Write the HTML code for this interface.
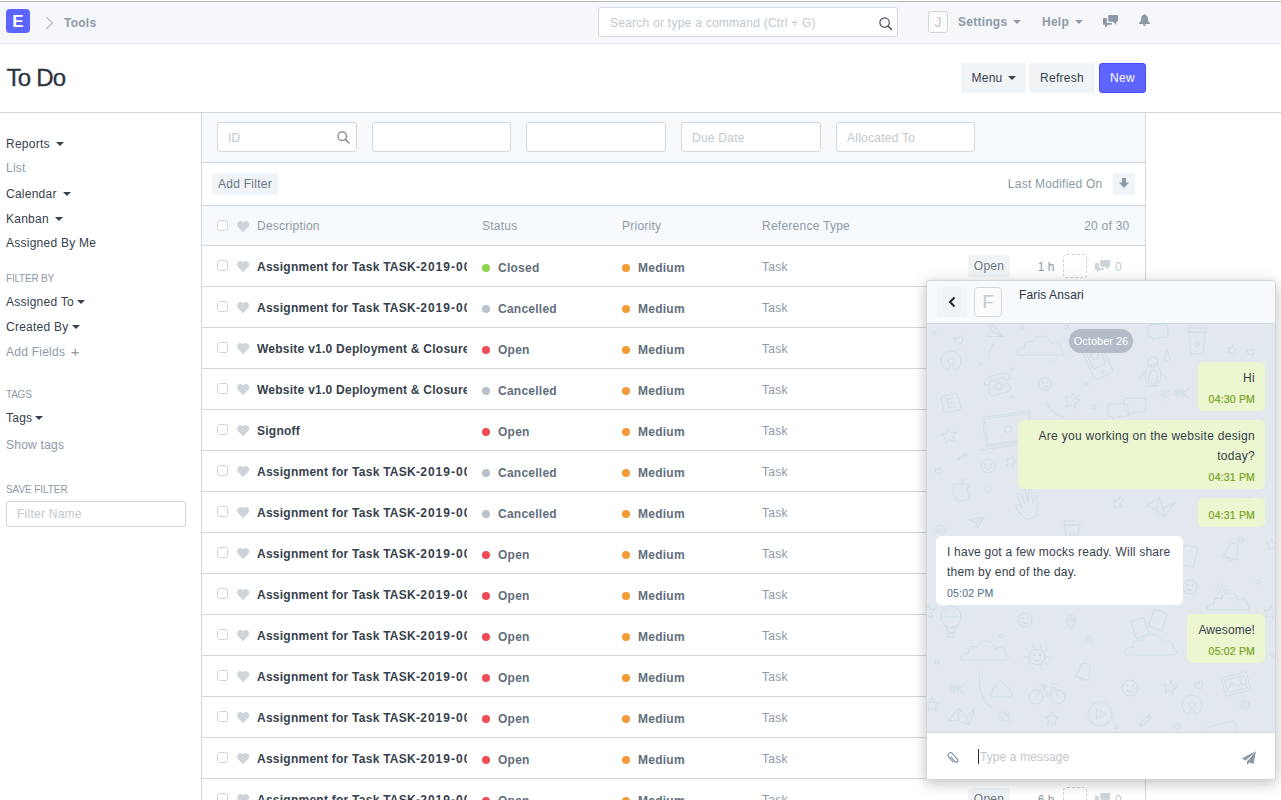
<!DOCTYPE html>
<html lang="en">
<head>
<meta charset="utf-8">
<title>To Do</title>
<style>
*{box-sizing:border-box;margin:0;padding:0}
html,body{width:1281px;height:800px;overflow:hidden;background:#fff}
body{font-family:"Liberation Sans",Arial,sans-serif;font-size:12px;color:#36414c;position:relative;letter-spacing:.25px}
.abs{position:absolute}
/* navbar */
.topline{position:absolute;left:0;top:1px;width:1281px;height:1px;background:#b7b7b7}
.navbar{position:absolute;left:0;top:2px;width:1281px;height:42px;background:#f5f7fa;border-bottom:1px solid #e4e8ec}
.logo{position:absolute;left:6px;top:7px;width:24px;height:24px;border-radius:4px;background:#5e64ff;color:#fff;font-weight:bold;font-size:17px;line-height:26px;text-align:center;letter-spacing:0}
.crumb{position:absolute;left:64px;top:14px;font-weight:bold;font-size:12px;color:#8d99a6;line-height:14px}
.search{position:absolute;left:598px;top:5px;width:300px;height:30px;border:1px solid #d1d8dd;border-radius:3px;background:#fff;color:#c0c8d0;font-size:12px;line-height:30px;padding-left:11px}
.nav-av{position:absolute;left:928px;top:9px;width:20px;height:22px;border:1px solid #d1d8dd;border-radius:3px;background:#fafbfc;color:#c4ccd4;font-size:14px;line-height:20px;text-align:center;letter-spacing:0}
.navtxt{position:absolute;top:13px;font-weight:bold;color:#8d99a6;font-size:12px;line-height:14px}
.caret{display:inline-block;width:0;height:0;border-left:4px solid transparent;border-right:4px solid transparent;border-top:4px solid currentColor;vertical-align:middle;margin-left:6px;margin-top:-1px}
/* page head */
.title{position:absolute;left:6.5px;top:62px;font-size:24px;line-height:32px;color:#2b3440;letter-spacing:-0.75px;-webkit-text-stroke:.3px #2b3440}
.btn{position:absolute;top:63px;height:30px;border-radius:3px;background:#f0f4f7;color:#36414c;font-size:12px;line-height:30px;text-align:center}
.btn.primary{background:#5e64ff;color:#fff;border:1px solid #444bff}
.hline{position:absolute;left:0;top:112px;width:1281px;height:1px;background:#d1d8dd}
/* sidebar */
.side{position:absolute;left:0;top:113px;width:201px;height:687px}
.side div{position:absolute;left:6px;line-height:14px;white-space:nowrap}
.side .muted{color:#8d99a6}
.side .lbl{font-size:10px;color:#8d99a6;letter-spacing:-.22px}
.side .inp{left:6px;top:388px;width:180px;height:26px;border:1px solid #d1d8dd;border-radius:3px;color:#c0c8d0;line-height:24px;padding-left:10px}
/* list */
.list{position:absolute;left:201px;top:113px;width:945px;height:687px;border-left:1px solid #d1d8dd;border-right:1px solid #d1d8dd;overflow:hidden}
.frow{position:absolute;left:0;top:0;width:943px;height:50px;background:#f7fafc;border-bottom:1px solid #d1d8dd}
.finp{position:absolute;top:9px;width:140px;height:30px;border:1px solid #d1d8dd;border-radius:3px;background:#fff;color:#c0c8d0;line-height:30px;padding-left:10px}
.addf{position:absolute;left:10px;top:60px;width:66px;height:22px;border-radius:3px;background:#f0f4f7;color:#6c7680;line-height:22px;text-align:center}
.sort{position:absolute;top:64px;right:42.5px;color:#8d99a6;line-height:14px}
.sortbtn{position:absolute;left:911px;top:60px;width:22px;height:22px;border-radius:3px;background:#f0f4f7}
.lhead{position:absolute;left:0;top:92px;width:943px;height:41px;background:#f7fafc;border-top:1px solid #d1d8dd;border-bottom:1px solid #d1d8dd;color:#8d99a6}
.lhead span.t{position:absolute;top:13px;line-height:14px}
.row{position:absolute;left:0;width:943px;height:41px;border-bottom:1px solid #d1d8dd;background:#fff}
.cb{position:absolute;left:15px;top:14px;width:11px;height:11px;border:1px solid #cdd4db;border-radius:2.5px;background:#fff}
.heart{position:absolute;left:35px;top:14.7px;width:12.2px;height:11.2px;fill:#cdd4da}
.desc{position:absolute;left:55px;top:14px;width:210px;overflow:hidden;white-space:nowrap;font-weight:bold;line-height:14px;color:#36414c}
.num{letter-spacing:1.05px}
.dot{position:absolute;top:18px;width:8px;height:8px;border-radius:50%}
.dot.g{background:#8fd250}.dot.y{background:#b9c1cc}.dot.r{background:#ee4c57}.dot.o{background:#f29b38}
.st{position:absolute;top:15px;font-weight:bold;color:#626e7b;line-height:14px}
.ref{position:absolute;left:560px;top:14px;color:#8d99a6;line-height:14px}
.badge{position:absolute;left:766px;top:9px;width:42px;height:22px;border-radius:3px;background:#f0f4f7;color:#6c7680;line-height:22px;text-align:center}
.age{position:absolute;right:90.5px;top:14px;letter-spacing:0;text-align:right;color:#8d99a6;line-height:14px}
.asg{position:absolute;left:861px;top:8px;width:24px;height:24px;border:1px dashed #ccd3d9;border-radius:4px}
.comm{position:absolute;left:893px;top:14px;width:15px;height:12.75px;fill:#cdd4da}
.cnt{position:absolute;left:913px;top:14px;color:#c0c8d0;line-height:14px}
/* chat */
.chat{position:absolute;left:926px;top:280px;width:350px;height:500px;background:#e3e8ef;border:1px solid #d1d8dd;border-radius:4px 4px 0 0;box-shadow:0 3px 14px rgba(0,0,0,.26);overflow:hidden}
.chead{position:absolute;left:-1px;top:-1px;width:348px;height:43px;background:#f7fafc;border-bottom:1px solid #d1d8dd}
.back{position:absolute;left:10px;top:6px;width:30px;height:30px;border-radius:3px;background:#f0f4f7}
.cav{position:absolute;left:47px;top:6px;width:28px;height:30px;border:1px solid #d1d8dd;border-radius:4px;background:#fafbfc;color:#c0c8d0;font-size:18px;line-height:28px;text-align:center}
.cname{position:absolute;left:92px;top:7px;font-size:12px;line-height:14px;color:#2b3440;letter-spacing:.13px}
.pill{position:absolute;left:141px;top:47px;width:64px;height:24px;border-radius:12px;background:#b3bcc8;color:#fff;font-size:11px;line-height:24px;text-align:center;letter-spacing:0}
.bub{position:absolute;border-radius:5px;padding:5px 10px 0 10px;line-height:20px;font-size:12px;color:#36414c;border:1px solid transparent;letter-spacing:.3px}
.bub.me{background:#ecf6d0;border-color:#ecf6d0;text-align:right;right:10px;padding-right:9px}
.bub.you{background:#fff;border-color:#fff;left:8px;letter-spacing:.22px}
.bub .tm{display:block;font-size:10.5px;line-height:18px;margin-top:2px;height:20px;color:#76a31a;letter-spacing:.18px;-webkit-text-stroke:.2px #76a31a}
.bub.you .tm{color:#56708c;-webkit-text-stroke:.08px #56708c}
.cin{position:absolute;left:1px;top:1px;width:347px;height:497px}
.cinput{position:absolute;left:-1px;top:450px;width:348px;height:47px;background:#fff;border-top:1px solid #d1d8dd}
</style>
</head>
<body>
<div class="topline"></div>
<div class="navbar">
  <div class="logo">E</div>
  <svg class="abs" style="left:45px;top:13.5px" width="9" height="14" viewBox="0 0 9 14"><path d="M1 1l6.5 6L1 13" fill="none" stroke="#b8c2cc" stroke-width="1.4"/></svg>
  <div class="crumb">Tools</div>
  <div class="search">Search or type a command (Ctrl + G)
    <svg class="abs" style="left:280px;top:8.5px" width="14" height="14" viewBox="0 0 14 14"><circle cx="5.6" cy="5.6" r="4.700" fill="none" stroke="#47525d" stroke-width="1.200"/><path d="M9 9l3.400 3.400" stroke="#47525d" stroke-width="1.500" stroke-linecap="round"/></svg>
  </div>
  <div class="nav-av">J</div>
  <div class="navtxt" style="left:958px">Settings<span class="caret"></span></div>
  <div class="navtxt" style="left:1042px">Help<span class="caret"></span></div>
  <svg class="abs" style="left:1103px;top:13px" width="15" height="12.75" viewBox="0 0 15 12.75"><g fill="#8d99a6"><path d="M6 0h8.200a.8.800 0 0 1 .8.800v5.150a.8.800 0 0 1-.8.800H13.200v3L10 6.750H6a.8.800 0 0 1-.8-.8V.8A.8.800 0 0 1 6 0z"/><path d="M.8 3H3.800v4.200a.8.800 0 0 0 .8.800H9v.95a.8.800 0 0 1-.8.800H5L2 12.750V9.750H.8a.8.800 0 0 1-.8-.8V3.800A.8.800 0 0 1 .8 3z"/></g></svg>
  <svg class="abs" style="left:1139px;top:11.700px" width="11" height="12" viewBox="0 0 11 12"><path fill="#8d99a6" d="M5.500 0c.5 0 .8.300.8.800 1.500.400 2.500 1.700 2.500 3.400 0 2 .5 3.200 1.700 4.300.300.300.500.600.500 1v.5H0v-.5c0-.4.200-.7.500-1C1.700 7.400 2.200 6.200 2.200 4.200c0-1.700 1-3 2.500-3.400 0-.5.300-.8.800-.8zM4 10.200h3c0 1-.7 1.700-1.500 1.700S4 11.200 4 10.200z"/></svg>
</div>

<div class="title">To Do</div>
<div class="btn" style="left:961px;width:65px">Menu<span class="caret" style="margin-left:5px"></span></div>
<div class="btn" style="left:1029px;width:66px">Refresh</div>
<div class="btn primary" style="left:1099px;width:47px;line-height:28px">New</div>
<div class="hline"></div>

<div class="side">
  <div style="top:24px">Reports<span class="caret"></span></div>
  <div class="muted" style="top:48px">List</div>
  <div style="top:74px">Calendar<span class="caret"></span></div>
  <div style="top:99px">Kanban<span class="caret"></span></div>
  <div style="top:123px">Assigned By Me</div>
  <div class="lbl" style="top:158.5px">FILTER BY</div>
  <div style="top:182px">Assigned To<span class="caret" style="margin-left:3px"></span></div>
  <div style="top:207px">Created By<span class="caret" style="margin-left:3px"></span></div>
  <div class="muted" style="top:231px">Add Fields <span style="font-size:15px;line-height:14px;position:relative;top:1px;margin-left:2px">+</span></div>
  <div class="lbl" style="top:274.5px">TAGS</div>
  <div style="top:298px">Tags<span class="caret" style="margin-left:3px"></span></div>
  <div class="muted" style="top:325px">Show tags</div>
  <div class="lbl" style="top:369.5px;letter-spacing:-.08px">SAVE FILTER</div>
  <div class="inp">Filter Name</div>
</div>

<div class="list">
  <div class="frow">
    <div class="finp" style="left:15px">ID
      <svg class="abs" style="left:119px;top:8px" width="13" height="13" viewBox="0 0 14 14"><circle cx="5.6" cy="5.6" r="4.6" fill="none" stroke="#74808c" stroke-width="1.300"/><path d="M9 9l4 4" stroke="#74808c" stroke-width="1.500" stroke-linecap="round"/></svg>
    </div>
    <div class="finp" style="left:170px;width:139px"></div>
    <div class="finp" style="left:324px"></div>
    <div class="finp" style="left:479px">Due Date</div>
    <div class="finp" style="left:634px;width:139px">Allocated To</div>
  </div>
  <div class="addf">Add Filter</div>
  <div class="sort">Last Modified On</div>
  <div class="sortbtn"><svg class="abs" style="left:6px;top:5px" width="10" height="10" viewBox="0 0 10 10"><path fill="#8d99a6" d="M3 0h4v4.500h3L5 10 0 4.500h3z"/></svg></div>
  <div class="lhead">
    <span class="cb" style="top:14px"></span><svg class="heart" viewBox="0 0 12 11"><path d="M6 11L1 5.800C-.3 4.400-.3 2.200 1 .9 2.300-.3 4.300-.3 5.600.9L6 1.400 6.400.9C7.700-.3 9.700-.3 11 .9c1.300 1.300 1.300 3.500 0 4.900z"/></svg>
    <span class="t" style="left:55px">Description</span>
    <span class="t" style="left:280px">Status</span>
    <span class="t" style="left:420px">Priority</span>
    <span class="t" style="left:560px">Reference Type</span>
    <span class="t" style="right:15.5px">20 of 30</span>
  </div>
  <div class="rows">
<div class="row" style="top:133px">
<span class="cb"></span><svg class="heart" viewBox="0 0 12 11"><path d="M6 11L1 5.800C-.3 4.400-.3 2.200 1 .9 2.300-.3 4.300-.3 5.600.9L6 1.400 6.400.9C7.700-.3 9.700-.3 11 .9c1.300 1.300 1.300 3.500 0 4.900z"/></svg>
<span class="desc">Assignment for Task TASK-<span class="num">2019-00001</span></span>
<span class="dot g" style="left:280px"></span><span class="st" style="left:296px">Closed</span>
<span class="dot o" style="left:420px"></span><span class="st" style="left:436px">Medium</span>
<span class="ref">Task</span>
<span class="badge">Open</span><span class="age">1 h</span><span class="asg"></span><svg class="comm" viewBox="0 0 15 12.75"><path d="M6 0h8.200a.8.800 0 0 1 .8.800v5.150a.8.800 0 0 1-.8.800H13.200v3L10 6.750H6a.8.800 0 0 1-.8-.8V.8A.8.800 0 0 1 6 0z"/><path d="M.8 3H3.800v4.200a.8.800 0 0 0 .8.800H9v.95a.8.800 0 0 1-.8.800H5L2 12.750V9.750H.8a.8.800 0 0 1-.8-.8V3.800A.8.800 0 0 1 .8 3z"/></svg><span class="cnt">0</span>
</div>
<div class="row" style="top:174px">
<span class="cb"></span><svg class="heart" viewBox="0 0 12 11"><path d="M6 11L1 5.800C-.3 4.400-.3 2.200 1 .9 2.300-.3 4.300-.3 5.600.9L6 1.400 6.400.9C7.700-.3 9.700-.3 11 .9c1.300 1.300 1.300 3.500 0 4.900z"/></svg>
<span class="desc">Assignment for Task TASK-<span class="num">2019-00002</span></span>
<span class="dot y" style="left:280px"></span><span class="st" style="left:296px">Cancelled</span>
<span class="dot o" style="left:420px"></span><span class="st" style="left:436px">Medium</span>
<span class="ref">Task</span>
<span class="badge">Open</span><span class="age">1 h</span><span class="asg"></span><svg class="comm" viewBox="0 0 15 12.75"><path d="M6 0h8.200a.8.800 0 0 1 .8.800v5.150a.8.800 0 0 1-.8.800H13.200v3L10 6.750H6a.8.800 0 0 1-.8-.8V.8A.8.800 0 0 1 6 0z"/><path d="M.8 3H3.800v4.200a.8.800 0 0 0 .8.800H9v.95a.8.800 0 0 1-.8.800H5L2 12.750V9.750H.8a.8.800 0 0 1-.8-.8V3.800A.8.800 0 0 1 .8 3z"/></svg><span class="cnt">0</span>
</div>
<div class="row" style="top:215px">
<span class="cb"></span><svg class="heart" viewBox="0 0 12 11"><path d="M6 11L1 5.800C-.3 4.400-.3 2.200 1 .9 2.300-.3 4.300-.3 5.600.9L6 1.400 6.400.9C7.700-.3 9.700-.3 11 .9c1.300 1.300 1.300 3.500 0 4.900z"/></svg>
<span class="desc">Website v1.0 Deployment &amp; Closure</span>
<span class="dot r" style="left:280px"></span><span class="st" style="left:296px">Open</span>
<span class="dot o" style="left:420px"></span><span class="st" style="left:436px">Medium</span>
<span class="ref">Task</span>
<span class="badge">Open</span><span class="age">2 h</span><span class="asg"></span><svg class="comm" viewBox="0 0 15 12.75"><path d="M6 0h8.200a.8.800 0 0 1 .8.800v5.150a.8.800 0 0 1-.8.800H13.200v3L10 6.750H6a.8.800 0 0 1-.8-.8V.8A.8.800 0 0 1 6 0z"/><path d="M.8 3H3.800v4.200a.8.800 0 0 0 .8.800H9v.95a.8.800 0 0 1-.8.800H5L2 12.750V9.750H.8a.8.800 0 0 1-.8-.8V3.800A.8.800 0 0 1 .8 3z"/></svg><span class="cnt">0</span>
</div>
<div class="row" style="top:256px">
<span class="cb"></span><svg class="heart" viewBox="0 0 12 11"><path d="M6 11L1 5.800C-.3 4.400-.3 2.200 1 .9 2.300-.3 4.300-.3 5.600.9L6 1.400 6.400.9C7.700-.3 9.700-.3 11 .9c1.300 1.300 1.300 3.500 0 4.900z"/></svg>
<span class="desc">Website v1.0 Deployment &amp; Closure</span>
<span class="dot y" style="left:280px"></span><span class="st" style="left:296px">Cancelled</span>
<span class="dot o" style="left:420px"></span><span class="st" style="left:436px">Medium</span>
<span class="ref">Task</span>
<span class="badge">Open</span><span class="age">2 h</span><span class="asg"></span><svg class="comm" viewBox="0 0 15 12.75"><path d="M6 0h8.200a.8.800 0 0 1 .8.800v5.150a.8.800 0 0 1-.8.800H13.200v3L10 6.750H6a.8.800 0 0 1-.8-.8V.8A.8.800 0 0 1 6 0z"/><path d="M.8 3H3.800v4.200a.8.800 0 0 0 .8.800H9v.95a.8.800 0 0 1-.8.800H5L2 12.750V9.750H.8a.8.800 0 0 1-.8-.8V3.800A.8.800 0 0 1 .8 3z"/></svg><span class="cnt">0</span>
</div>
<div class="row" style="top:297px">
<span class="cb"></span><svg class="heart" viewBox="0 0 12 11"><path d="M6 11L1 5.800C-.3 4.400-.3 2.200 1 .9 2.300-.3 4.300-.3 5.600.9L6 1.400 6.400.9C7.700-.3 9.700-.3 11 .9c1.300 1.300 1.300 3.500 0 4.900z"/></svg>
<span class="desc">Signoff</span>
<span class="dot r" style="left:280px"></span><span class="st" style="left:296px">Open</span>
<span class="dot o" style="left:420px"></span><span class="st" style="left:436px">Medium</span>
<span class="ref">Task</span>
<span class="badge">Open</span><span class="age">3 h</span><span class="asg"></span><svg class="comm" viewBox="0 0 15 12.75"><path d="M6 0h8.200a.8.800 0 0 1 .8.800v5.150a.8.800 0 0 1-.8.800H13.200v3L10 6.750H6a.8.800 0 0 1-.8-.8V.8A.8.800 0 0 1 6 0z"/><path d="M.8 3H3.800v4.200a.8.800 0 0 0 .8.800H9v.95a.8.800 0 0 1-.8.800H5L2 12.750V9.750H.8a.8.800 0 0 1-.8-.8V3.800A.8.800 0 0 1 .8 3z"/></svg><span class="cnt">0</span>
</div>
<div class="row" style="top:338px">
<span class="cb"></span><svg class="heart" viewBox="0 0 12 11"><path d="M6 11L1 5.800C-.3 4.400-.3 2.200 1 .9 2.300-.3 4.300-.3 5.600.9L6 1.400 6.400.9C7.700-.3 9.700-.3 11 .9c1.300 1.300 1.300 3.500 0 4.900z"/></svg>
<span class="desc">Assignment for Task TASK-<span class="num">2019-00003</span></span>
<span class="dot y" style="left:280px"></span><span class="st" style="left:296px">Cancelled</span>
<span class="dot o" style="left:420px"></span><span class="st" style="left:436px">Medium</span>
<span class="ref">Task</span>
<span class="badge">Open</span><span class="age">3 h</span><span class="asg"></span><svg class="comm" viewBox="0 0 15 12.75"><path d="M6 0h8.200a.8.800 0 0 1 .8.800v5.150a.8.800 0 0 1-.8.800H13.200v3L10 6.750H6a.8.800 0 0 1-.8-.8V.8A.8.800 0 0 1 6 0z"/><path d="M.8 3H3.800v4.200a.8.800 0 0 0 .8.800H9v.95a.8.800 0 0 1-.8.800H5L2 12.750V9.750H.8a.8.800 0 0 1-.8-.8V3.800A.8.800 0 0 1 .8 3z"/></svg><span class="cnt">0</span>
</div>
<div class="row" style="top:379px">
<span class="cb"></span><svg class="heart" viewBox="0 0 12 11"><path d="M6 11L1 5.800C-.3 4.400-.3 2.200 1 .9 2.300-.3 4.300-.3 5.600.9L6 1.400 6.400.9C7.700-.3 9.700-.3 11 .9c1.300 1.300 1.300 3.500 0 4.900z"/></svg>
<span class="desc">Assignment for Task TASK-<span class="num">2019-00004</span></span>
<span class="dot y" style="left:280px"></span><span class="st" style="left:296px">Cancelled</span>
<span class="dot o" style="left:420px"></span><span class="st" style="left:436px">Medium</span>
<span class="ref">Task</span>
<span class="badge">Open</span><span class="age">4 h</span><span class="asg"></span><svg class="comm" viewBox="0 0 15 12.75"><path d="M6 0h8.200a.8.800 0 0 1 .8.800v5.150a.8.800 0 0 1-.8.800H13.200v3L10 6.750H6a.8.800 0 0 1-.8-.8V.8A.8.800 0 0 1 6 0z"/><path d="M.8 3H3.800v4.200a.8.800 0 0 0 .8.800H9v.95a.8.800 0 0 1-.8.800H5L2 12.750V9.750H.8a.8.800 0 0 1-.8-.8V3.800A.8.800 0 0 1 .8 3z"/></svg><span class="cnt">0</span>
</div>
<div class="row" style="top:420px">
<span class="cb"></span><svg class="heart" viewBox="0 0 12 11"><path d="M6 11L1 5.800C-.3 4.400-.3 2.200 1 .9 2.300-.3 4.300-.3 5.600.9L6 1.400 6.400.9C7.700-.3 9.700-.3 11 .9c1.300 1.300 1.300 3.500 0 4.900z"/></svg>
<span class="desc">Assignment for Task TASK-<span class="num">2019-00005</span></span>
<span class="dot r" style="left:280px"></span><span class="st" style="left:296px">Open</span>
<span class="dot o" style="left:420px"></span><span class="st" style="left:436px">Medium</span>
<span class="ref">Task</span>
<span class="badge">Open</span><span class="age">4 h</span><span class="asg"></span><svg class="comm" viewBox="0 0 15 12.75"><path d="M6 0h8.200a.8.800 0 0 1 .8.800v5.150a.8.800 0 0 1-.8.800H13.200v3L10 6.750H6a.8.800 0 0 1-.8-.8V.8A.8.800 0 0 1 6 0z"/><path d="M.8 3H3.800v4.200a.8.800 0 0 0 .8.800H9v.95a.8.800 0 0 1-.8.800H5L2 12.750V9.750H.8a.8.800 0 0 1-.8-.8V3.800A.8.800 0 0 1 .8 3z"/></svg><span class="cnt">0</span>
</div>
<div class="row" style="top:461px">
<span class="cb"></span><svg class="heart" viewBox="0 0 12 11"><path d="M6 11L1 5.800C-.3 4.400-.3 2.200 1 .9 2.300-.3 4.300-.3 5.600.9L6 1.400 6.400.9C7.700-.3 9.700-.3 11 .9c1.300 1.300 1.300 3.500 0 4.900z"/></svg>
<span class="desc">Assignment for Task TASK-<span class="num">2019-00006</span></span>
<span class="dot r" style="left:280px"></span><span class="st" style="left:296px">Open</span>
<span class="dot o" style="left:420px"></span><span class="st" style="left:436px">Medium</span>
<span class="ref">Task</span>
<span class="badge">Open</span><span class="age">5 h</span><span class="asg"></span><svg class="comm" viewBox="0 0 15 12.75"><path d="M6 0h8.200a.8.800 0 0 1 .8.800v5.150a.8.800 0 0 1-.8.800H13.200v3L10 6.750H6a.8.800 0 0 1-.8-.8V.8A.8.800 0 0 1 6 0z"/><path d="M.8 3H3.800v4.200a.8.800 0 0 0 .8.800H9v.95a.8.800 0 0 1-.8.800H5L2 12.750V9.750H.8a.8.800 0 0 1-.8-.8V3.800A.8.800 0 0 1 .8 3z"/></svg><span class="cnt">0</span>
</div>
<div class="row" style="top:502px">
<span class="cb"></span><svg class="heart" viewBox="0 0 12 11"><path d="M6 11L1 5.800C-.3 4.400-.3 2.200 1 .9 2.300-.3 4.300-.3 5.600.9L6 1.400 6.400.9C7.700-.3 9.700-.3 11 .9c1.300 1.300 1.300 3.500 0 4.900z"/></svg>
<span class="desc">Assignment for Task TASK-<span class="num">2019-00007</span></span>
<span class="dot r" style="left:280px"></span><span class="st" style="left:296px">Open</span>
<span class="dot o" style="left:420px"></span><span class="st" style="left:436px">Medium</span>
<span class="ref">Task</span>
<span class="badge">Open</span><span class="age">5 h</span><span class="asg"></span><svg class="comm" viewBox="0 0 15 12.75"><path d="M6 0h8.200a.8.800 0 0 1 .8.800v5.150a.8.800 0 0 1-.8.800H13.200v3L10 6.750H6a.8.800 0 0 1-.8-.8V.8A.8.800 0 0 1 6 0z"/><path d="M.8 3H3.800v4.200a.8.800 0 0 0 .8.800H9v.95a.8.800 0 0 1-.8.800H5L2 12.750V9.750H.8a.8.800 0 0 1-.8-.8V3.800A.8.800 0 0 1 .8 3z"/></svg><span class="cnt">0</span>
</div>
<div class="row" style="top:543px">
<span class="cb"></span><svg class="heart" viewBox="0 0 12 11"><path d="M6 11L1 5.800C-.3 4.400-.3 2.200 1 .9 2.300-.3 4.300-.3 5.600.9L6 1.400 6.400.9C7.700-.3 9.700-.3 11 .9c1.300 1.300 1.300 3.500 0 4.900z"/></svg>
<span class="desc">Assignment for Task TASK-<span class="num">2019-00008</span></span>
<span class="dot r" style="left:280px"></span><span class="st" style="left:296px">Open</span>
<span class="dot o" style="left:420px"></span><span class="st" style="left:436px">Medium</span>
<span class="ref">Task</span>
<span class="badge">Open</span><span class="age">5 h</span><span class="asg"></span><svg class="comm" viewBox="0 0 15 12.75"><path d="M6 0h8.200a.8.800 0 0 1 .8.800v5.150a.8.800 0 0 1-.8.800H13.200v3L10 6.750H6a.8.800 0 0 1-.8-.8V.8A.8.800 0 0 1 6 0z"/><path d="M.8 3H3.800v4.200a.8.800 0 0 0 .8.800H9v.95a.8.800 0 0 1-.8.800H5L2 12.750V9.750H.8a.8.800 0 0 1-.8-.8V3.800A.8.800 0 0 1 .8 3z"/></svg><span class="cnt">0</span>
</div>
<div class="row" style="top:584px">
<span class="cb"></span><svg class="heart" viewBox="0 0 12 11"><path d="M6 11L1 5.800C-.3 4.400-.3 2.200 1 .9 2.300-.3 4.300-.3 5.600.9L6 1.400 6.400.9C7.700-.3 9.700-.3 11 .9c1.300 1.300 1.300 3.500 0 4.900z"/></svg>
<span class="desc">Assignment for Task TASK-<span class="num">2019-00009</span></span>
<span class="dot r" style="left:280px"></span><span class="st" style="left:296px">Open</span>
<span class="dot o" style="left:420px"></span><span class="st" style="left:436px">Medium</span>
<span class="ref">Task</span>
<span class="badge">Open</span><span class="age">6 h</span><span class="asg"></span><svg class="comm" viewBox="0 0 15 12.75"><path d="M6 0h8.200a.8.800 0 0 1 .8.800v5.150a.8.800 0 0 1-.8.800H13.200v3L10 6.750H6a.8.800 0 0 1-.8-.8V.8A.8.800 0 0 1 6 0z"/><path d="M.8 3H3.800v4.200a.8.800 0 0 0 .8.800H9v.95a.8.800 0 0 1-.8.800H5L2 12.750V9.750H.8a.8.800 0 0 1-.8-.8V3.800A.8.800 0 0 1 .8 3z"/></svg><span class="cnt">0</span>
</div>
<div class="row" style="top:625px">
<span class="cb"></span><svg class="heart" viewBox="0 0 12 11"><path d="M6 11L1 5.800C-.3 4.400-.3 2.200 1 .9 2.300-.3 4.300-.3 5.600.9L6 1.400 6.400.9C7.700-.3 9.700-.3 11 .9c1.300 1.300 1.300 3.500 0 4.900z"/></svg>
<span class="desc">Assignment for Task TASK-<span class="num">2019-00010</span></span>
<span class="dot r" style="left:280px"></span><span class="st" style="left:296px">Open</span>
<span class="dot o" style="left:420px"></span><span class="st" style="left:436px">Medium</span>
<span class="ref">Task</span>
<span class="badge">Open</span><span class="age">6 h</span><span class="asg"></span><svg class="comm" viewBox="0 0 15 12.75"><path d="M6 0h8.200a.8.800 0 0 1 .8.800v5.150a.8.800 0 0 1-.8.800H13.200v3L10 6.750H6a.8.800 0 0 1-.8-.8V.8A.8.800 0 0 1 6 0z"/><path d="M.8 3H3.800v4.200a.8.800 0 0 0 .8.800H9v.95a.8.800 0 0 1-.8.800H5L2 12.750V9.750H.8a.8.800 0 0 1-.8-.8V3.800A.8.800 0 0 1 .8 3z"/></svg><span class="cnt">0</span>
</div>
<div class="row" style="top:666px">
<span class="cb"></span><svg class="heart" viewBox="0 0 12 11"><path d="M6 11L1 5.800C-.3 4.400-.3 2.200 1 .9 2.300-.3 4.300-.3 5.600.9L6 1.400 6.400.9C7.700-.3 9.700-.3 11 .9c1.300 1.300 1.300 3.500 0 4.900z"/></svg>
<span class="desc">Assignment for Task TASK-<span class="num">2019-00011</span></span>
<span class="dot r" style="left:280px"></span><span class="st" style="left:296px">Open</span>
<span class="dot o" style="left:420px"></span><span class="st" style="left:436px">Medium</span>
<span class="ref">Task</span>
<span class="badge">Open</span><span class="age">6 h</span><span class="asg"></span><svg class="comm" viewBox="0 0 15 12.75"><path d="M6 0h8.200a.8.800 0 0 1 .8.800v5.150a.8.800 0 0 1-.8.800H13.200v3L10 6.750H6a.8.800 0 0 1-.8-.8V.8A.8.800 0 0 1 6 0z"/><path d="M.8 3H3.800v4.200a.8.800 0 0 0 .8.800H9v.95a.8.800 0 0 1-.8.800H5L2 12.750V9.750H.8a.8.800 0 0 1-.8-.8V3.800A.8.800 0 0 1 .8 3z"/></svg><span class="cnt">0</span>
</div>
  </div>
</div>

<div class="chat"><div class="cin">
  <div class="chead">
    <div class="back"><svg class="abs" style="left:11px;top:9px" width="8" height="12" viewBox="0 0 8 12"><path d="M6.500 1.500L2 6l4.500 4.500" fill="none" stroke="#1f272e" stroke-width="2"/></svg></div>
    <div class="cav">F</div>
    <div class="cname">Faris Ansari</div>
  </div>
  <svg class="abs" style="left:-1px;top:41px" width="348" height="409" viewBox="927 323 348 409"><g fill="none" stroke="#d0dee6" stroke-width="1" stroke-linejoin="round" stroke-linecap="round"><path transform="translate(959 340) rotate(-15)" d="M0 4.5C-8 -1.5 -2.5 -6 0 -1.5C2.5 -6 8 -1.5 0 4.5z"/><path transform="translate(1040 346) scale(1)" d="M-22 9H22C25 9 25 4 21 3 22-3 15-6 11-2 9-12-5-13-7-3-11-7-17-3-15 2-21 1-25 7-22 9z" stroke-width="1"/><path d="M1151 324.5h14a3 3 0 0 1 3 3v7a3 3 0 0 1-3 3h-8l-4 4v-4h-2a3 3 0 0 1-3-3v-7a3 3 0 0 1 3-3z"/><path d="M1189 332h16l-2 22h-12z"/><rect x="1188" y="328" width="18" height="4" rx="1"/><circle cx="1197" cy="344" r="2.5"/><path d="M1232.9 345.1L1233.7 348.3L1237 349.3L1234.1 351.1L1234.2 354.5L1231.6 352.4L1228.4 353.5L1229.6 350.3L1227.6 347.7L1230.9 347.8z"/><path transform="translate(1251 352) rotate(-20)" d="M0 3.6C-6.4 -1.2 -2 -4.8 0 -1.2C2 -4.8 6.4 -1.2 0 3.6z"/><path d="M947.5 370.5A10 10 0 1 1 954.5 370.5L952 364A3 3 0 1 0 950 364z"/><g transform="translate(998 383) rotate(-15)"><path d="M-13-4C-13-10 13-10 13-4V-1H7V-4H-7V-1H-13zM-7-3L-11 8A3 3 0 0 0-8 11H8A3 3 0 0 0 11 8L7-3"/><circle cx="0" cy="3" r="4.500"/><circle cx="0" cy="3" r="2.500"/></g><g transform="translate(1096 358) rotate(-25)"><rect x="-10" y="-20" width="20" height="40" rx="3"/><rect x="-7" y="-13" width="14" height="22" rx="1"/><circle cx="0" cy="15" r="1.500"/><rect x="-3.500" y="-6" width="7" height="7" rx="1.500"/></g><ellipse cx="1153" cy="375" rx="8" ry="11"/><ellipse cx="1153" cy="377" rx="4.500" ry="7"/><circle cx="1153" cy="362" r="5"/><path d="M1145 372l-5 6M1161 372l5 6M1147 386h5M1154 386h5"/><circle cx="1045" cy="384" r="6.5"/><circle cx="1042.7" cy="382.4" r="0.6"/><circle cx="1047.3" cy="382.4" r="0.6"/><path d="M1041.8 385.3Q1045 389.5 1048.2 385.3"/><path d="M1167 351C1172 357 1170 361 1167 361C1164 361 1162 357 1167 351z"/><g transform="translate(951 403) rotate(-15)"><rect x="-8.5" y="-8.5" width="17" height="17" rx="3"/><path d="M3-4.500H-3V4.500H3M-3 0H2"/></g><path d="M1073.4 393.1L1074.8 398.3L1079.9 399.9L1075.4 402.8L1075.5 408.2L1071.3 404.8L1066.2 406.6L1068.2 401.5L1064.9 397.2L1070.3 397.5z"/><path d="M1127 398h16a3 3 0 0 1 3 3v8a3 3 0 0 1-3 3h-10l-4 4v-4h-2a3 3 0 0 1-3-3v-8a3 3 0 0 1 3-3z"/><path d="M1111 403.5h14a3 3 0 0 1 3 3v7a3 3 0 0 1-3 3h-8l-4 4v-4h-2a3 3 0 0 1-3-3v-7a3 3 0 0 1 3-3z"/><path d="M1166.5 395L1170 395M1166.1 396.1L1168.5 398.5M1165 396.5L1165 400M1163.9 396.1L1161.5 398.5M1163.5 395L1160 395M1163.9 393.9L1161.5 391.5M1165 393.5L1165 390M1166.1 393.9L1168.5 391.5"/><circle cx="1178" cy="393" r="3.5"/><circle cx="1178" cy="393" r="1.5"/><path d="M1183 388V398M1189 388L1183 393L1189 398"/><g transform="translate(1008 429) rotate(-8)"><rect x="-24" y="-15" width="48" height="30" rx="1"/><rect x="-22" y="-13" width="44" height="26"/><path d="M-30 17H30"/><rect x="-3" y="-3" width="6" height="6" rx="1.500"/></g><path d="M947.6 428.1L950.7 432.5L956.1 432.2L952.8 436.5L954.8 441.6L949.7 439.8L945.5 443.2L945.6 437.8L941.1 434.9L946.2 433.3z"/><circle cx="988" cy="466" r="7"/><circle cx="985.5" cy="464.2" r="0.6"/><circle cx="990.5" cy="464.2" r="0.6"/><path d="M984.5 467.4Q988 471.9 991.5 467.4"/><path d="M1012.6 456.2L1013.2 460.2L1017 461.7L1013.4 463.6L1013.2 467.6L1010.3 464.8L1006.3 465.8L1008.1 462.2L1006 458.7L1010 459.3z"/><path transform="translate(962 457) rotate(60) scale(0.6)" d="M-2-9H2V6L0 10-2 6zM-2 6H2M-2-6H2" stroke-width="1.7"/><path transform="translate(939 471) rotate(-20)" d="M0 3.6C-6.4 -1.2 -2 -4.8 0 -1.2C2 -4.8 6.4 -1.2 0 3.6z"/><path transform="translate(962 491)" d="M0-6C-3-9-9-7-9-1-9 5-5 10-2 10-1 10-1 9 0 9 1 9 1 10 2 10 5 10 8 5 8 2 5 1 4-3 7-5 5-8 2-8 0-6zM0-7C0-10 2-12 4-12"/><path transform="translate(1028 505) rotate(-15)" d="M-8 10C-12 2-13-3-11-4-9-4-8 0-6 2L-8-12C-8-14-5-14-5-12L-3-2-2-15C-2-17 1-17 1-15L1-2 4-13C5-15 7-14 7-12L5 0 9-6C10-8 12-7 11-5L7 8C6 12 2 14-2 14-5 14-7 12-8 10z"/><path transform="translate(1118 503) rotate(40) scale(0.8)" d="M-3-7H3V0H7L0 7-7 0H-3z" stroke-width="1.2"/><path transform="translate(1160 506) rotate(10) scale(1)" d="M-14 2L-2-8 4 2 14-6 6 10-4 4zM-2-8L-4 4M4 2L6 10" stroke-width="1"/><path transform="translate(976 521) rotate(10) scale(0.9)" d="M-8 0L8-6 3 7 0 2zM0 2L8-6" stroke-width="1.1"/><path d="M1065 525h14l-2 18h-10z"/><rect x="1064" y="521" width="16" height="4" rx="1"/><circle cx="1072" cy="535" r="2.5"/><path d="M940 530L940.1 530.1L940.2 530.2L940.2 530.4L940.1 530.6L939.9 530.7L939.5 530.8L939.2 530.7L938.9 530.4L938.7 530L938.6 529.5L938.7 528.9L939.1 528.4L939.7 528.1L940.4 527.9L941.2 528.1L941.9 528.5L942.4 529.2L942.7 530L942.7 531L942.3 532L941.5 532.8L940.5 533.3L939.3 533.4L938.1 533.1L937.1 532.3L936.3 531.2L936 529.9L936.1 528.5L936.7 527.1L937.9 526L939.3 525.4L941 525.3L942.6 525.8L944 526.8L945 528.4L945.4 530.2L945.1 532.1L944.2 533.8L942.7 535.2"/><path transform="translate(988 489) rotate(0)" d="M0 3.6C-6.4 -1.2 -2 -4.8 0 -1.2C2 -4.8 6.4 -1.2 0 3.6z"/><path transform="translate(993 330) rotate(70) scale(1.2)" d="M-8 0L8-6 3 7 0 2zM0 2L8-6" stroke-width="0.8"/><circle cx="934" cy="333" r="1.8"/><circle cx="1022" cy="328" r="2"/><circle cx="981" cy="364" r="1.8"/><circle cx="1012" cy="369" r="1.3"/><circle cx="1012" cy="397" r="1.8"/><circle cx="1086" cy="384" r="2"/><circle cx="1094" cy="407" r="2"/><circle cx="1066" cy="327" r="2"/><path d="M994 343Q988 350 989 358"/><path d="M1047 403Q1050 413 1063 417"/><path d="M1048 360Q1052 365 1057 358"/><path transform="translate(1232 552) rotate(15) scale(1.3)" d="M-6 5H6C4 3 4 0 4-2 4-5 2-7 0-7-2-7-4-5-4-2-4 0-4 3-6 5zM-1.500 5a1.500 1.500 0 0 0 3 0" stroke-width="0.8"/><circle cx="1190" cy="587" r="7"/><circle cx="1187.5" cy="585.2" r="0.6"/><circle cx="1192.5" cy="585.2" r="0.6"/><path d="M1186.5 588.4Q1190 593 1193.5 588.4"/><path transform="translate(1228 602) scale(0.9)" d="M-22 9H22C25 9 25 4 21 3 22-3 15-6 11-2 9-12-5-13-7-3-11-7-17-3-15 2-21 1-25 7-22 9z" stroke-width="1.2"/><path d="M1223.5 590L1229 590M1223.1 591.1L1226.9 594.9M1222 591.5L1222 597M1220.9 591.1L1217.1 594.9M1220.5 590L1215 590M1220.9 588.9L1217.1 585.1M1222 588.5L1222 583M1223.1 588.9L1226.9 585.1"/><ellipse cx="951" cy="617" rx="10" ry="11"/><path d="M945 626L949 633H954L957 626M941 617H961"/><rect x="948" y="633" width="6" height="4"/><circle cx="1025" cy="620" r="7"/><circle cx="1022.5" cy="618.2" r="0.6"/><circle cx="1027.5" cy="618.2" r="0.6"/><path d="M1021.5 621.4Q1025 626 1028.5 621.4"/><path d="M1071 629C1064 621 1067 615 1071 615C1075 615 1078 621 1071 629z"/><circle cx="1071" cy="619.5" r="1.8"/><path transform="translate(1150 645) scale(1.1)" d="M-22 9H22C25 9 25 4 21 3 22-3 15-6 11-2 9-12-5-13-7-3-11-7-17-3-15 2-21 1-25 7-22 9z" stroke-width="0.9"/><g transform="translate(1140 628) rotate(-20)"><rect x="-7" y="-9" width="14" height="18" rx="1"/></g><g transform="translate(1158 620) rotate(20)"><rect x="-7" y="-9" width="14" height="18" rx="1"/></g><path d="M1089 640L1089.1 640L1089.2 640.2L1089.2 640.3L1089.1 640.5L1088.9 640.6L1088.6 640.6L1088.3 640.6L1088.1 640.3L1087.9 640L1087.8 639.6L1088 639.1L1088.3 638.7L1088.7 638.4L1089.3 638.3L1090 638.4L1090.6 638.7L1091 639.3L1091.2 640L1091.2 640.9L1090.9 641.6L1090.3 642.3L1089.4 642.7L1088.4 642.8L1087.4 642.6L1086.6 642L1085.9 641L1085.6 639.9L1085.7 638.7L1086.3 637.6L1087.2 636.7L1088.4 636.2L1089.8 636.1L1091.2 636.5L1092.3 637.4L1093.2 638.6L1093.5 640.2L1093.3 641.7L1092.5 643.2L1091.3 644.3"/><path transform="translate(984 651) scale(1)" d="M-22 9H22C25 9 25 4 21 3 22-3 15-6 11-2 9-12-5-13-7-3-11-7-17-3-15 2-21 1-25 7-22 9z" stroke-width="1"/><circle cx="1037" cy="657" r="8"/><circle cx="1034.2" cy="655" r="0.6"/><circle cx="1039.8" cy="655" r="0.6"/><path d="M1033 658.6Q1037 663.8 1041 658.6"/><path d="M1047 657L1050 657"/><path d="M1045.1 662.9L1047.5 664.6"/><path d="M1040.1 666.5L1041 669.4"/><path d="M1033.9 666.5L1033 669.4"/><path d="M1028.9 662.9L1026.5 664.6"/><path d="M1027 657L1024 657"/><path d="M1028.9 651.1L1026.5 649.4"/><path d="M1033.9 647.5L1033 644.6"/><path d="M1040.1 647.5L1041 644.6"/><path d="M1045.1 651.1L1047.5 649.4"/><path transform="translate(1084 672) rotate(15) scale(1.3)" d="M-6 5H6C4 3 4 0 4-2 4-5 2-7 0-7-2-7-4-5-4-2-4 0-4 3-6 5zM-1.500 5a1.500 1.500 0 0 0 3 0" stroke-width="0.8"/><circle cx="1130" cy="688" r="8"/><circle cx="1127.2" cy="686" r="0.6"/><circle cx="1132.8" cy="686" r="0.6"/><path d="M1126 689.6Q1130 694.8 1134 689.6"/><path d="M1171.2 681.1L1172.4 685.7L1176.9 687L1173 689.6L1173.1 694.3L1169.4 691.3L1165 692.9L1166.7 688.5L1163.8 684.7L1168.5 685z"/><path transform="translate(1199 685) rotate(-10)" d="M0 4.5C-8 -1.5 -2.5 -6 0 -1.5C2.5 -6 8 -1.5 0 4.5z"/><g transform="translate(1236 684) rotate(-15)"><rect x="-13" y="-9.5" width="26" height="19" rx="1"/><rect x="-10" y="-6.500" width="20" height="13"/><path d="M-10 4L-4-2 1 3 5 0 10 5"/><circle cx="5" cy="-3" r="1.500"/></g><circle cx="953" cy="689" r="3.5"/><circle cx="953" cy="689" r="1.5"/><path d="M958 684V694M964 684L958 689L964 694"/><path transform="translate(1001 689)" d="M-9 8C-12 8-12 3-8 3-10 0-7-2-5-2-6-5-2-6 0-9 2-6 6-5 5-2 8-2 10 1 8 3 12 3 12 8 9 8z"/><circle cx="1036" cy="697" r="7"/><circle cx="1058" cy="697" r="7"/><path d="M1036 697L1043 687H1054L1058 697M1043 687L1048 697L1054 687M1052 684h5M1040 685h6"/><circle cx="1100" cy="714" r="12"/><path d="M1097 709L1106 714L1097 719z"/><path d="M1188.5 714.5A10 10 0 1 1 1195.5 714.5L1193 708A3 3 0 1 0 1191 708z"/><path d="M1244 705L1244.1 705.1L1244.2 705.2L1244.2 705.4L1244.1 705.6L1243.9 705.7L1243.5 705.8L1243.2 705.7L1242.9 705.4L1242.7 705L1242.6 704.5L1242.7 703.9L1243.1 703.4L1243.7 703.1L1244.4 702.9L1245.2 703.1L1245.9 703.5L1246.4 704.2L1246.7 705L1246.7 706L1246.3 707L1245.5 707.8L1244.5 708.3L1243.3 708.4L1242.1 708.1L1241.1 707.3L1240.3 706.2L1240 704.9L1240.1 703.5L1240.7 702.1L1241.9 701L1243.3 700.4L1245 700.3L1246.6 700.8L1248 701.8L1249 703.4L1249.4 705.2L1249.1 707.1L1248.2 708.8L1246.7 710.2"/><path transform="translate(962 716) rotate(-10) scale(1)" d="M-14 2L-2-8 4 2 14-6 6 10-4 4zM-2-8L-4 4M4 2L6 10" stroke-width="1"/><path transform="translate(1005 717) rotate(-45) scale(0.8)" d="M-3-7H3V0H7L0 7-7 0H-3z" stroke-width="1.2"/><path d="M1052.6 712L1054.2 716.5L1058.8 717.4L1055.1 720.3L1055.6 725L1051.7 722.3L1047.4 724.3L1048.7 719.8L1045.6 716.3L1050.3 716.1z"/><path transform="translate(1145 721) rotate(45) scale(0.8)" d="M-2-9H2V6L0 10-2 6zM-2 6H2M-2-6H2" stroke-width="1.2"/><path transform="translate(1177 726) rotate(-15)" d="M0 3.6C-6.4 -1.2 -2 -4.8 0 -1.2C2 -4.8 6.4 -1.2 0 3.6z"/><path d="M932 698L934 702.3L938.7 702.8L935.2 706L936.1 710.7L932 708.4L927.9 710.7L928.8 706L925.3 702.8L930 702.3z"/><path d="M979 672Q978 700 992 708"/><circle cx="1001" cy="636" r="1.8"/><circle cx="1081" cy="598" r="1.8"/><circle cx="1258" cy="582" r="2"/><circle cx="1117" cy="727" r="1.8"/><circle cx="937" cy="662" r="2"/><g transform="translate(1222 732) rotate(-15)"><rect x="-15" y="-8" width="30" height="16" rx="3"/></g><path d="M928 605L930 609.3L934.7 609.8L931.2 613L932.1 617.7L928 615.4L923.9 617.7L924.8 613L921.3 609.8L926 609.3z"/><path d="M1272 539L1273.7 542.7L1277.7 543.1L1274.7 545.9L1275.5 549.9L1272 547.9L1268.5 549.9L1269.3 545.9L1266.3 543.1L1270.3 542.7z"/><path d="M1271.2 606.1L1272.4 610.7L1276.9 612L1273 614.6L1273.1 619.3L1269.4 616.3L1265 617.9L1266.7 613.5L1263.8 609.7L1268.5 610z"/><circle cx="1272" cy="655" r="2"/><path d="M1240 540L1240.1 540L1240.2 540.1L1240.1 540.3L1240.1 540.4L1239.9 540.5L1239.7 540.5L1239.5 540.4L1239.2 540.3L1239.1 540L1239.1 539.6L1239.2 539.3L1239.4 539L1239.8 538.7L1240.3 538.6L1240.8 538.7L1241.2 539L1241.6 539.4L1241.8 540L1241.8 540.7L1241.5 541.3L1241 541.8L1240.3 542.2L1239.6 542.3L1238.8 542.1L1238 541.6L1237.5 540.8L1237.3 539.9L1237.4 539L1237.8 538.1L1238.6 537.4L1239.6 536.9L1240.6 536.9L1241.7 537.2L1242.7 537.9L1243.3 538.9L1243.6 540.1L1243.4 541.4L1242.8 542.5L1241.8 543.4"/><path d="M1122 537h12a3 3 0 0 1 3 3v6a3 3 0 0 1-3 3h-6l-4 4v-4h-2a3 3 0 0 1-3-3v-6a3 3 0 0 1 3-3z"/><circle cx="1073" cy="541" r="3"/><circle cx="1006" cy="541" r="3"/><g transform="translate(1189 556) rotate(15)"><rect x="-7" y="-10" width="14" height="20" rx="1"/></g><path d="M1060 455Q1070 470 1090 470"/><circle cx="1210" cy="470" r="2"/><circle cx="1100" cy="450" r="2"/><circle cx="1190" cy="440" r="2"/><path d="M1240 444L1241.7 447.7L1245.7 448.1L1242.7 450.9L1243.5 454.9L1240 452.9L1236.5 454.9L1237.3 450.9L1234.3 448.1L1238.3 447.7z"/><path transform="translate(1250 500) rotate(0)" d="M0 3.6C-6.4 -1.2 -2 -4.8 0 -1.2C2 -4.8 6.4 -1.2 0 3.6z"/><circle cx="1215" cy="520" r="6"/><circle cx="1212.9" cy="518.5" r="0.6"/><circle cx="1217.1" cy="518.5" r="0.6"/><path d="M1212 521.2Q1215 525.1 1218 521.2"/></g></svg>
  <div class="pill">October 26</div>
  <div class="bub me" style="top:80px">Hi<span class="tm">04:30 PM</span></div>
  <div class="bub me" style="top:138px;width:247px">Are you working on the website design today?<span class="tm">04:31 PM</span></div>
  <div class="bub me" style="top:216px"><span class="tm">04:31 PM</span></div>
  <div class="bub you" style="top:254px;width:247px">I have got a few mocks ready. Will share them by end of the day.<span class="tm">05:02 PM</span></div>
  <div class="bub me" style="top:332px;letter-spacing:.1px">Awesome!<span class="tm">05:02 PM</span></div>
  <div class="cinput">
    <svg class="abs" style="left:19px;top:18px" width="14" height="14" viewBox="0 0 14 14"><g transform="translate(7.2,7.2) rotate(-41)" fill="none" stroke="#7b8ba0" stroke-width="1.100" stroke-linecap="round"><path d="M-.9-2.400V3.700a1.700 1.700 0 0 0 3.400 0V-4a2.500 2.500 0 0 0-5 0V2.900"/></g></svg>
    <div class="abs" style="left:51px;top:16px;width:1px;height:15px;background:#2b2b2b"></div>
    <div class="abs" style="left:53px;top:17px;color:#c0c8d0;line-height:14px;letter-spacing:.09px">Type a message</div>
    <svg class="abs" style="left:315px;top:18px" width="14" height="14" viewBox="0 0 14 14"><path fill="#8d99a6" d="M13.200.4L0 7.300l3.300 2.400L11.500 2.500zM14 0L5 10.400V14l2.400-2.400 4.200 1.400z"/></svg>
  </div>
</div></div>
</body>
</html>
